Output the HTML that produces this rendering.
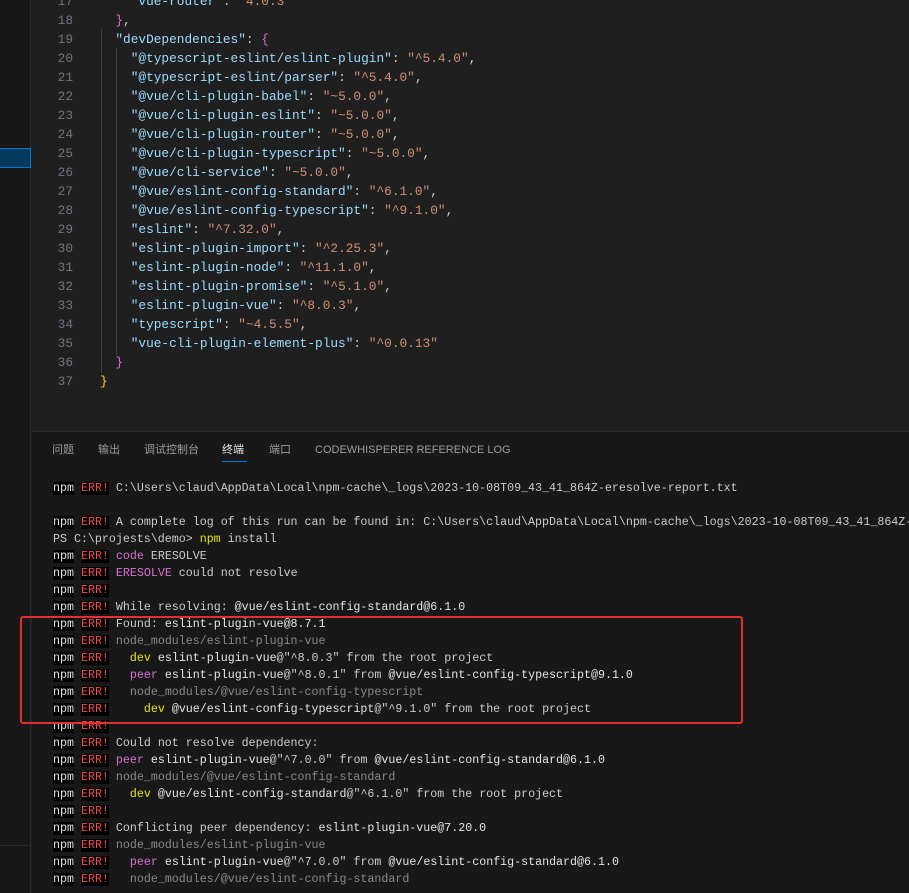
<!DOCTYPE html>
<html><head><meta charset="utf-8"><style>
*{margin:0;padding:0;box-sizing:border-box}
html,body{width:909px;height:893px;overflow:hidden}
body{background:#1f1f1f;position:relative;font-family:"Liberation Mono",monospace}
#side{position:absolute;left:0;top:0;width:31px;height:893px;background:#181818;border-right:1px solid #2b2b2b}
#sel{position:absolute;left:0;top:148px;width:31px;height:20px;background:#04395e;border:1px solid #0078d4;border-left:none}
#sdiv{position:absolute;left:0;top:845px;width:31px;height:1px;background:#2b2b2b}
#ed{position:absolute;left:32px;top:0;width:877px;height:431px;background:#1f1f1f}
.ln{position:absolute;left:32px;width:41px;text-align:right;font-size:12.8px;color:#6e7681;line-height:19px;height:19px}
.cl{position:absolute;left:100px;font-size:12.8px;line-height:19px;height:19px;white-space:pre;color:#cccccc}
.k{color:#9cdcfe}.s{color:#ce9178}.p{color:#da70d6}.y{color:#ffd700}
.guide{position:absolute;width:1px;background:#404040}
#panel{position:absolute;left:32px;top:431px;width:877px;height:462px;background:#181818;border-top:1px solid #2b2b2b}
.tab{position:absolute;top:443px;font-family:"Liberation Sans","Noto Sans CJK SC",sans-serif;font-size:11px;color:#9d9d9d;line-height:14px;white-space:nowrap}
#ul{position:absolute;left:222px;top:461px;width:25px;height:1px;background:#0078d4}
#term{position:absolute;left:53px;top:479.5px;width:856px;height:414px;overflow:hidden;font-size:11.65px;line-height:17px;color:#cccccc}
#term div{height:17px;white-space:pre}
.n{background:#000;color:#e5e5e5}.e{background:#000;color:#f14c4c}
.m{color:#d670d6}.g{color:#8a8a8a}.w{color:#e5e510}
#term b{font-weight:normal;color:#e5e5e5}
#box{position:absolute;left:20px;top:616px;width:723px;height:108px;border:2px solid #e3302e;border-radius:3px}
</style></head><body>
<div id="side"><div id="sel"></div><div id="sdiv"></div></div>
<div id="ed"></div>
<div class="guide" style="left:101px;top:29px;height:344px"></div>
<div class="guide" style="left:116px;top:48px;height:307px"></div>
<div class="ln" style="top:-8px">17</div><div class="cl" style="top:-8px">    <span class="k">"vue-router"</span>: <span class="s">"4.0.3"</span></div>
<div class="ln" style="top:11px">18</div><div class="cl" style="top:11px">  <span class="p">}</span>,</div>
<div class="ln" style="top:30px">19</div><div class="cl" style="top:30px">  <span class="k">"devDependencies"</span>: <span class="p">{</span></div>
<div class="ln" style="top:49px">20</div><div class="cl" style="top:49px">    <span class="k">"@typescript-eslint/eslint-plugin"</span>: <span class="s">"^5.4.0"</span>,</div>
<div class="ln" style="top:68px">21</div><div class="cl" style="top:68px">    <span class="k">"@typescript-eslint/parser"</span>: <span class="s">"^5.4.0"</span>,</div>
<div class="ln" style="top:87px">22</div><div class="cl" style="top:87px">    <span class="k">"@vue/cli-plugin-babel"</span>: <span class="s">"~5.0.0"</span>,</div>
<div class="ln" style="top:106px">23</div><div class="cl" style="top:106px">    <span class="k">"@vue/cli-plugin-eslint"</span>: <span class="s">"~5.0.0"</span>,</div>
<div class="ln" style="top:125px">24</div><div class="cl" style="top:125px">    <span class="k">"@vue/cli-plugin-router"</span>: <span class="s">"~5.0.0"</span>,</div>
<div class="ln" style="top:144px">25</div><div class="cl" style="top:144px">    <span class="k">"@vue/cli-plugin-typescript"</span>: <span class="s">"~5.0.0"</span>,</div>
<div class="ln" style="top:163px">26</div><div class="cl" style="top:163px">    <span class="k">"@vue/cli-service"</span>: <span class="s">"~5.0.0"</span>,</div>
<div class="ln" style="top:182px">27</div><div class="cl" style="top:182px">    <span class="k">"@vue/eslint-config-standard"</span>: <span class="s">"^6.1.0"</span>,</div>
<div class="ln" style="top:201px">28</div><div class="cl" style="top:201px">    <span class="k">"@vue/eslint-config-typescript"</span>: <span class="s">"^9.1.0"</span>,</div>
<div class="ln" style="top:220px">29</div><div class="cl" style="top:220px">    <span class="k">"eslint"</span>: <span class="s">"^7.32.0"</span>,</div>
<div class="ln" style="top:239px">30</div><div class="cl" style="top:239px">    <span class="k">"eslint-plugin-import"</span>: <span class="s">"^2.25.3"</span>,</div>
<div class="ln" style="top:258px">31</div><div class="cl" style="top:258px">    <span class="k">"eslint-plugin-node"</span>: <span class="s">"^11.1.0"</span>,</div>
<div class="ln" style="top:277px">32</div><div class="cl" style="top:277px">    <span class="k">"eslint-plugin-promise"</span>: <span class="s">"^5.1.0"</span>,</div>
<div class="ln" style="top:296px">33</div><div class="cl" style="top:296px">    <span class="k">"eslint-plugin-vue"</span>: <span class="s">"^8.0.3"</span>,</div>
<div class="ln" style="top:315px">34</div><div class="cl" style="top:315px">    <span class="k">"typescript"</span>: <span class="s">"~4.5.5"</span>,</div>
<div class="ln" style="top:334px">35</div><div class="cl" style="top:334px">    <span class="k">"vue-cli-plugin-element-plus"</span>: <span class="s">"^0.0.13"</span></div>
<div class="ln" style="top:353px">36</div><div class="cl" style="top:353px">  <span class="p">}</span></div>
<div class="ln" style="top:372px">37</div><div class="cl" style="top:372px"><span class="y">}</span></div>
<div id="panel"></div>
<div class="tab" style="left:52px">问题</div>
<div class="tab" style="left:98px">输出</div>
<div class="tab" style="left:144px">调试控制台</div>
<div class="tab" style="left:222px;color:#e7e7e7">终端</div>
<div class="tab" style="left:269px">端口</div>
<div class="tab" style="left:315px">CODEWHISPERER REFERENCE LOG</div>
<div id="ul"></div>
<div id="term"><div><span class="n">npm</span> <span class="e">ERR!</span> C:\Users\claud\AppData\Local\npm-cache\_logs\2023-10-08T09_43_41_864Z-eresolve-report.txt</div><div></div><div><span class="n">npm</span> <span class="e">ERR!</span> A complete log of this run can be found in: C:\Users\claud\AppData\Local\npm-cache\_logs\2023-10-08T09_43_41_864Z-debug-0.log</div><div>PS C:\projests\demo&gt; <span class="w">npm</span> install</div><div><span class="n">npm</span> <span class="e">ERR!</span> <span class="m">code</span> ERESOLVE</div><div><span class="n">npm</span> <span class="e">ERR!</span> <span class="m">ERESOLVE</span> could not resolve</div><div><span class="n">npm</span> <span class="e">ERR!</span></div><div><span class="n">npm</span> <span class="e">ERR!</span> While resolving: <b>@vue/eslint-config-standard@6.1.0</b></div><div><span class="n">npm</span> <span class="e">ERR!</span> Found: <b>eslint-plugin-vue@8.7.1</b></div><div><span class="n">npm</span> <span class="e">ERR!</span> <span class="g">node_modules/eslint-plugin-vue</span></div><div><span class="n">npm</span> <span class="e">ERR!</span>   <span class="w">dev</span> <b>eslint-plugin-vue</b>@"^8.0.3" from the root project</div><div><span class="n">npm</span> <span class="e">ERR!</span>   <span class="m">peer</span> <b>eslint-plugin-vue</b>@"^8.0.1" from <b>@vue/eslint-config-typescript@9.1.0</b></div><div><span class="n">npm</span> <span class="e">ERR!</span>   <span class="g">node_modules/@vue/eslint-config-typescript</span></div><div><span class="n">npm</span> <span class="e">ERR!</span>     <span class="w">dev</span> <b>@vue/eslint-config-typescript</b>@"^9.1.0" from the root project</div><div><span class="n">npm</span> <span class="e">ERR!</span></div><div><span class="n">npm</span> <span class="e">ERR!</span> Could not resolve dependency:</div><div><span class="n">npm</span> <span class="e">ERR!</span> <span class="m">peer</span> <b>eslint-plugin-vue</b>@"^7.0.0" from <b>@vue/eslint-config-standard@6.1.0</b></div><div><span class="n">npm</span> <span class="e">ERR!</span> <span class="g">node_modules/@vue/eslint-config-standard</span></div><div><span class="n">npm</span> <span class="e">ERR!</span>   <span class="w">dev</span> <b>@vue/eslint-config-standard</b>@"^6.1.0" from the root project</div><div><span class="n">npm</span> <span class="e">ERR!</span></div><div><span class="n">npm</span> <span class="e">ERR!</span> Conflicting peer dependency: <b>eslint-plugin-vue@7.20.0</b></div><div><span class="n">npm</span> <span class="e">ERR!</span> <span class="g">node_modules/eslint-plugin-vue</span></div><div><span class="n">npm</span> <span class="e">ERR!</span>   <span class="m">peer</span> <b>eslint-plugin-vue</b>@"^7.0.0" from <b>@vue/eslint-config-standard@6.1.0</b></div><div><span class="n">npm</span> <span class="e">ERR!</span>   <span class="g">node_modules/@vue/eslint-config-standard</span></div></div>
<div id="box"></div>
</body></html>
